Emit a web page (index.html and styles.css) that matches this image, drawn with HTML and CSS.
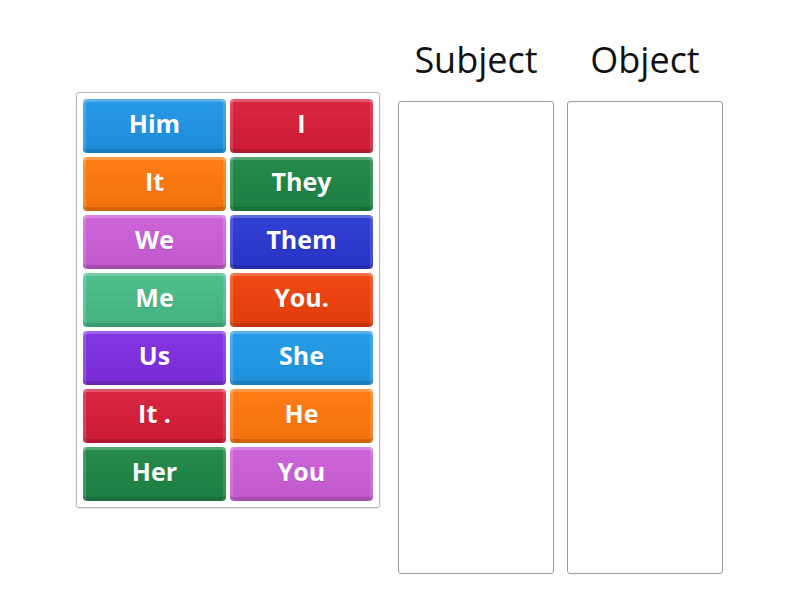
FILE: index.html
```html
<!DOCTYPE html>
<html>
<head>
<meta charset="utf-8">
<link rel="stylesheet" href="styles.css">
</head>
<body>
<div class="page">
  <div class="pool">
    <div class="tile blue">Him</div>
    <div class="tile red">I</div>
    <div class="tile orange">It</div>
    <div class="tile green">They</div>
    <div class="tile pink">We</div>
    <div class="tile indigo">Them</div>
    <div class="tile mint">Me</div>
    <div class="tile vermil">You.</div>
    <div class="tile violet">Us</div>
    <div class="tile sky">She</div>
    <div class="tile red">It .</div>
    <div class="tile orange">He</div>
    <div class="tile green">Her</div>
    <div class="tile pink">You</div>
  </div>
  <div class="cols">
    <div class="col">
      <div class="head">Subject</div>
      <div class="box"></div>
    </div>
    <div class="col">
      <div class="head">Object</div>
      <div class="box"></div>
    </div>
  </div>
</div>
</body>
</html>
```
FILE: styles.css
```css
html, body {
  margin: 0;
  padding: 0;
  background: #fff;
  font-family: "Open Sans", "Noto Sans", sans-serif;
}
.page {
  display: flex;
  align-items: flex-start;
  padding-left: 76px;
  width: 800px;
  height: 600px;
  box-sizing: border-box;
}
.pool {
  margin-top: 92px;
  width: 304px;
  box-sizing: border-box;
  border: 1px solid #b4b4b4;
  border-radius: 3px;
  padding: 6px;
  display: grid;
  grid-template-columns: 143px 143px;
  grid-auto-rows: 54px;
  column-gap: 4px;
  row-gap: 4px;
  box-shadow: 0 1px 2px rgba(0,0,0,0.12);
}
.tile {
  border-radius: 4px;
  color: #fff;
  font-weight: 700;
  font-size: 25px;
  display: flex;
  align-items: center;
  justify-content: center;
  padding-bottom: 6px;
  box-sizing: border-box;
  text-shadow: 0 1px 1px rgba(0,0,0,0.12);
  background-image: linear-gradient(to bottom, rgba(255,255,255,0.04), rgba(0,0,0,0.06));
  box-shadow:
    inset 0 -4px 0 rgba(0,0,0,0.13),
    inset 0 3px 0 rgba(255,255,255,0.22),
    inset 3px 0 0 rgba(255,255,255,0.16),
    inset -3px 0 0 rgba(255,255,255,0.12);
}
.blue { background-color: #1f95e6; }
.red { background-color: #d81d39; }
.orange { background-color: #ff780c; }
.green { background-color: #1e8646; }
.pink { background-color: #cc5ed8; }
.indigo { background-color: #2a38d2; }
.mint { background-color: #48bb88; }
.vermil { background-color: #ee410b; }
.violet { background-color: #7e2fe2; }
.sky { background-color: #1f99e6; }

.cols {
  display: flex;
  gap: 13px;
  margin-left: 18px;
  margin-top: 36px;
}
.col {
  width: 156px;
  display: flex;
  flex-direction: column;
}
.head {
  height: 48px;
  line-height: 48px;
  font-size: 36px;
  text-align: center;
  color: #111;
  margin-bottom: 17px;
  white-space: nowrap;
}
.box {
  height: 473px;
  box-sizing: border-box;
  border: 1px solid #9a9a9a;
  border-radius: 3px;
}
```
